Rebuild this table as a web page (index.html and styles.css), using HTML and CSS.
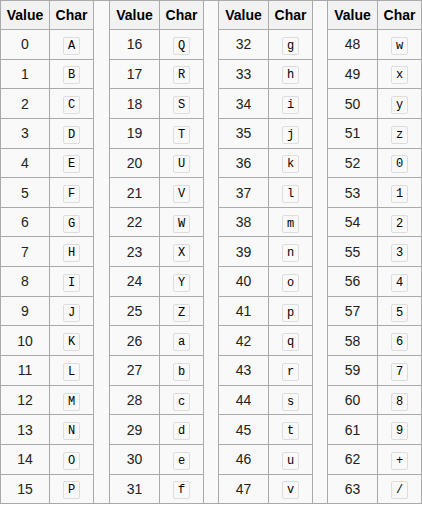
FILE: index.html
```html
<!DOCTYPE html>
<html>
<head>
<meta charset="utf-8">
<link rel="stylesheet" href="styles.css">
</head>
<body>
<table class="wikitable">
<colgroup>
<col class="c-val"><col class="c-chr"><col class="c-gap">
<col class="c-val2"><col class="c-chr"><col class="c-gap2">
<col class="c-val2"><col class="c-chr"><col class="c-gap2">
<col class="c-val2"><col class="c-chr">
</colgroup>
<tr class="head">
<th>Value</th><th>Char</th><td class="gap" rowspan="17"></td>
<th>Value</th><th>Char</th><td class="gap" rowspan="17"></td>
<th>Value</th><th>Char</th><td class="gap" rowspan="17"></td>
<th>Value</th><th>Char</th>
</tr>
<tr><td>0</td><td><code>A</code></td><td>16</td><td><code>Q</code></td><td>32</td><td><code>g</code></td><td>48</td><td><code>w</code></td></tr>
<tr><td>1</td><td><code>B</code></td><td>17</td><td><code>R</code></td><td>33</td><td><code>h</code></td><td>49</td><td><code>x</code></td></tr>
<tr><td>2</td><td><code>C</code></td><td>18</td><td><code>S</code></td><td>34</td><td><code>i</code></td><td>50</td><td><code>y</code></td></tr>
<tr><td>3</td><td><code>D</code></td><td>19</td><td><code>T</code></td><td>35</td><td><code>j</code></td><td>51</td><td><code>z</code></td></tr>
<tr><td>4</td><td><code>E</code></td><td>20</td><td><code>U</code></td><td>36</td><td><code>k</code></td><td>52</td><td><code>0</code></td></tr>
<tr><td>5</td><td><code>F</code></td><td>21</td><td><code>V</code></td><td>37</td><td><code>l</code></td><td>53</td><td><code>1</code></td></tr>
<tr><td>6</td><td><code>G</code></td><td>22</td><td><code>W</code></td><td>38</td><td><code>m</code></td><td>54</td><td><code>2</code></td></tr>
<tr><td>7</td><td><code>H</code></td><td>23</td><td><code>X</code></td><td>39</td><td><code>n</code></td><td>55</td><td><code>3</code></td></tr>
<tr><td>8</td><td><code>I</code></td><td>24</td><td><code>Y</code></td><td>40</td><td><code>o</code></td><td>56</td><td><code>4</code></td></tr>
<tr><td>9</td><td><code>J</code></td><td>25</td><td><code>Z</code></td><td>41</td><td><code>p</code></td><td>57</td><td><code>5</code></td></tr>
<tr><td>10</td><td><code>K</code></td><td>26</td><td><code>a</code></td><td>42</td><td><code>q</code></td><td>58</td><td><code>6</code></td></tr>
<tr><td>11</td><td><code>L</code></td><td>27</td><td><code>b</code></td><td>43</td><td><code>r</code></td><td>59</td><td><code>7</code></td></tr>
<tr><td>12</td><td><code>M</code></td><td>28</td><td><code>c</code></td><td>44</td><td><code>s</code></td><td>60</td><td><code>8</code></td></tr>
<tr><td>13</td><td><code>N</code></td><td>29</td><td><code>d</code></td><td>45</td><td><code>t</code></td><td>61</td><td><code>9</code></td></tr>
<tr><td>14</td><td><code>O</code></td><td>30</td><td><code>e</code></td><td>46</td><td><code>u</code></td><td>62</td><td><code>+</code></td></tr>
<tr><td>15</td><td><code>P</code></td><td>31</td><td><code>f</code></td><td>47</td><td><code>v</code></td><td>63</td><td><code>/</code></td></tr>
</table>
</body>
</html>
```
FILE: styles.css
```css
html, body {
  margin: 0;
  padding: 0;
  background: #ffffff;
}

.wikitable {
  border-collapse: collapse;
  table-layout: fixed;
  width: 422px;
  background: #f9f9f9;
  color: #222;
  font-family: "Liberation Sans", Arial, sans-serif;
  font-size: 14px;
  border: 1px solid #aaa;
}

.c-val { width: 49px; }
.c-val2 { width: 50px; }
.c-chr { width: 44px; }
.c-gap { width: 16px; }
.c-gap2 { width: 15px; }

.wikitable th,
.wikitable td {
  border: 1px solid #aaa;
  padding: 0;
  text-align: center;
  vertical-align: middle;
}

.wikitable th {
  background: #f2f2f2;
  color: #000;
  font-weight: bold;
}

.wikitable tr.head {
  height: 29px;
}

.wikitable tr {
  height: 29.65px;
}

.wikitable td.gap {
  background: #f9f9f9;
}

.wikitable code {
  font-family: "Liberation Mono", "Courier New", monospace;
  font-size: 12px;
  color: #000;
  background: #f9f9f9;
  border: 1px solid #ddd;
  border-radius: 2px;
  padding: 1px 4px;
}
```
